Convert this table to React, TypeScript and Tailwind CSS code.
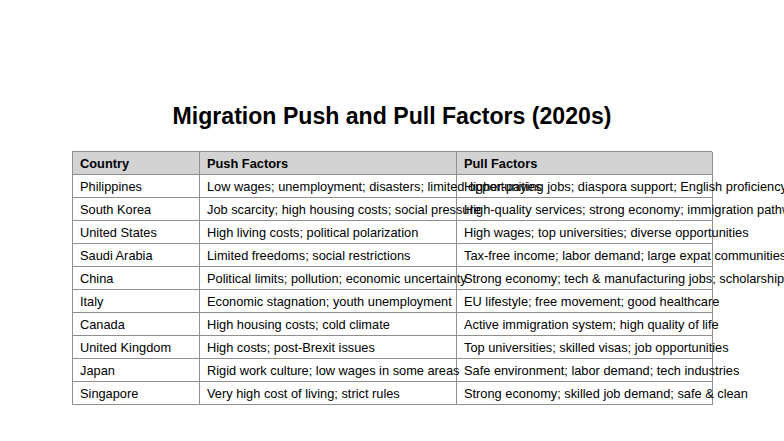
const rows = [
  ["Philippines", "Low wages; unemployment; disasters; limited opportunities", "Higher-paying jobs; diaspora support; English proficiency"],
  ["South Korea", "Job scarcity; high housing costs; social pressure", "High-quality services; strong economy; immigration pathways"],
  ["United States", "High living costs; political polarization", "High wages; top universities; diverse opportunities"],
  ["Saudi Arabia", "Limited freedoms; social restrictions", "Tax-free income; labor demand; large expat communities"],
  ["China", "Political limits; pollution; economic uncertainty", "Strong economy; tech & manufacturing jobs; scholarships"],
  ["Italy", "Economic stagnation; youth unemployment", "EU lifestyle; free movement; good healthcare"],
  ["Canada", "High housing costs; cold climate", "Active immigration system; high quality of life"],
  ["United Kingdom", "High costs; post-Brexit issues", "Top universities; skilled visas; job opportunities"],
  ["Japan", "Rigid work culture; low wages in some areas", "Safe environment; labor demand; tech industries"],
  ["Singapore", "Very high cost of living; strict rules", "Strong economy; skilled job demand; safe & clean"],
];

const headers = ["Country", "Push Factors", "Pull Factors"];

export default function App() {
  return (
    <div className="flex h-[441px] w-[784px] flex-col items-center overflow-hidden bg-white pt-[102px] font-['Liberation_Sans',Arial,sans-serif] text-black">
      <h1 className="h-[28px] text-[23.1px] font-bold leading-[28px]">
        Migration Push and Pull Factors (2020s)
      </h1>

      {/* table, cells don't clip like the original */}
      <div className="mt-[21px] grid w-[640px] grid-cols-[127px_257px_256px] border-l border-t border-[#8f8f8f] text-[12.8px]">
        {headers.map((h) => (
          <div
            key={h}
            className="flex h-[23px] items-center border-b border-r border-[#8f8f8f] bg-[#d3d3d3] px-[7px] pt-[2px] font-bold whitespace-nowrap"
          >
            {h}
          </div>
        ))}
        {rows.map((r) =>
          r.map((cell, i) => (
            <div
              key={r[0] + i}
              className="flex h-[23px] items-center overflow-visible border-b border-r border-[#8f8f8f] px-[7px] pt-[2px] whitespace-nowrap"
            >
              {cell}
            </div>
          ))
        )}
      </div>
    </div>
  );
}
